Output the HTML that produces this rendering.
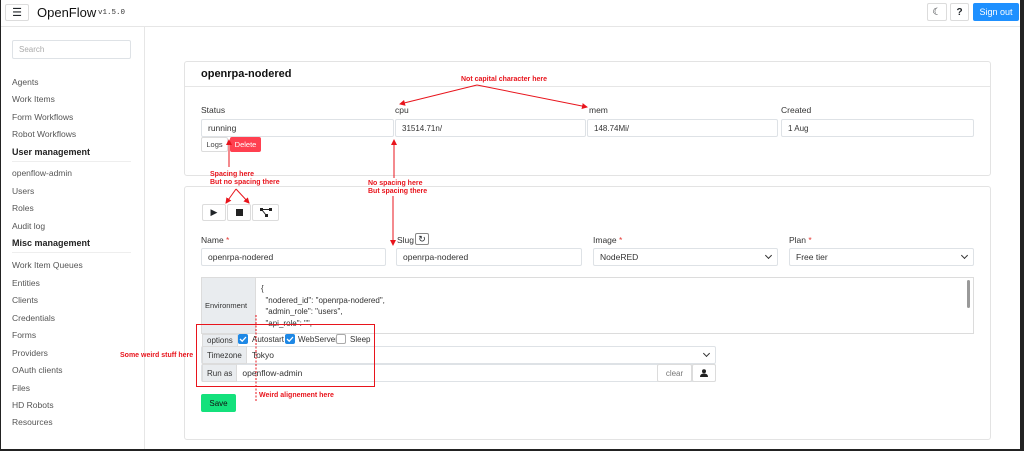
<!DOCTYPE html>
<html><head><meta charset="utf-8">
<style>
*{box-sizing:border-box;margin:0;padding:0}
body{width:1024px;height:451px;overflow:hidden;background:#fff;font-family:"Liberation Sans",sans-serif;color:#212529;position:relative;font-size:9px}
.a{position:absolute;white-space:nowrap}
.inp{position:absolute;border:1px solid #dee2e6;border-radius:2px;background:#fff;padding:0 6px;font-size:8.5px;display:flex;align-items:center;color:#333;white-space:nowrap}
.lbl{position:absolute;font-size:8.5px;color:#333;white-space:nowrap}
.card{position:absolute;border:1px solid #e3e3e3;border-radius:3px;background:#fff}
.nav{position:absolute;left:12px;font-size:8.5px;color:#555}
.navb{position:absolute;left:12px;font-size:9px;font-weight:bold;color:#222}
.btn{position:absolute;border:1px solid #dcdcdc;border-radius:2px;background:#fff;display:flex;align-items:center;justify-content:center;white-space:nowrap}
.req{color:#e53935}
.chev{position:absolute;right:6px;top:4px;width:5px;height:5px;border-right:1.2px solid #333;border-bottom:1.2px solid #333;transform:rotate(45deg)}
.grp{position:absolute;background:#e9ecef;border:1px solid #dcdcdc;display:flex;align-items:center;padding:0 4px;font-size:8px;color:#333;white-space:nowrap}
.cb{position:absolute;width:10px;height:10px;border-radius:2px}
.red{fill:#e8141c;font-family:"Liberation Sans",sans-serif;font-size:7px;font-weight:bold}
</style></head><body>
<div class="a" style="left:0;top:0;width:1px;height:451px;background:#222"></div>
<div class="a" style="left:1020px;top:0;width:4px;height:451px;background:#222"></div>
<div class="a" style="left:0;top:449px;width:1024px;height:2px;background:#222"></div>
<div class="a" style="left:1px;top:26px;width:1019px;height:1px;background:#e6e6e6"></div>
<div class="btn" style="left:5px;top:4px;width:24px;height:17px;font-size:11px">&#9776;</div>
<div class="a" style="left:37px;top:5px;font-size:13px;color:#111">OpenFlow</div>
<div class="a" style="left:98px;top:9px;font-size:7.5px;font-family:'Liberation Mono',monospace;color:#333">v1.5.0</div>
<div class="btn" style="left:927px;top:3px;width:20px;height:18px;font-size:10px">&#9790;</div>
<div class="btn" style="left:950px;top:3px;width:19px;height:18px;font-size:10px;font-weight:bold">?</div>
<div class="btn" style="left:973px;top:3px;width:46px;height:18px;background:#1e90ff;border-color:#1e90ff;color:#fff;font-size:9px">Sign out</div>
<div class="a" style="left:144px;top:27px;width:1px;height:422px;background:#e6e6e6"></div>
<div class="inp" style="left:12px;top:40px;width:119px;height:19px;color:#aaa;font-size:8px">Search</div>
<div class="nav" style="top:77px">Agents</div>
<div class="nav" style="top:94px">Work Items</div>
<div class="nav" style="top:112px">Form Workflows</div>
<div class="nav" style="top:129px">Robot Workflows</div>
<div class="navb" style="top:147px">User management</div>
<div class="a" style="left:12px;top:161px;width:119px;height:1px;background:#eee"></div>
<div class="nav" style="top:168px">openflow-admin</div>
<div class="nav" style="top:186px">Users</div>
<div class="nav" style="top:203px">Roles</div>
<div class="nav" style="top:221px">Audit log</div>
<div class="navb" style="top:238px">Misc management</div>
<div class="a" style="left:12px;top:252px;width:119px;height:1px;background:#eee"></div>
<div class="nav" style="top:260px">Work Item Queues</div>
<div class="nav" style="top:278px">Entities</div>
<div class="nav" style="top:295px">Clients</div>
<div class="nav" style="top:313px">Credentials</div>
<div class="nav" style="top:330px">Forms</div>
<div class="nav" style="top:348px">Providers</div>
<div class="nav" style="top:365px">OAuth clients</div>
<div class="nav" style="top:383px">Files</div>
<div class="nav" style="top:400px">HD Robots</div>
<div class="nav" style="top:417px">Resources</div>
<div class="card" style="left:184px;top:61px;width:807px;height:115px"></div>
<div class="a" style="left:185px;top:86px;width:805px;height:1px;background:#e6e6e6"></div>
<div class="a" style="left:201px;top:68px;font-size:11px;font-weight:bold;color:#111">openrpa-nodered</div>
<div class="lbl" style="left:201px;top:105px">Status</div>
<div class="lbl" style="left:395px;top:105px">cpu</div>
<div class="lbl" style="left:589px;top:105px">mem</div>
<div class="lbl" style="left:781px;top:105px">Created</div>
<div class="inp" style="left:201px;top:119px;width:193px;height:18px">running</div>
<div class="inp" style="left:395px;top:119px;width:191px;height:18px;font-size:8px">31514.71n/</div>
<div class="inp" style="left:587px;top:119px;width:191px;height:18px;font-size:8px">148.74Mi/</div>
<div class="inp" style="left:781px;top:119px;width:193px;height:18px;font-size:8px">1 Aug</div>
<div class="btn" style="left:201px;top:137px;width:27px;height:15px;font-size:7.5px;color:#444">Logs</div>
<div class="btn" style="left:230px;top:137px;width:31px;height:15px;font-size:7.5px;color:#fff;background:#ff4050;border-color:#ff4050">Delete</div>
<div class="card" style="left:184px;top:186px;width:807px;height:254px"></div>
<div class="btn" style="left:202px;top:204px;width:24px;height:17px;font-size:9px">&#9654;</div>
<div class="btn" style="left:227px;top:204px;width:24px;height:17px"><div style="width:7px;height:7px;background:#222"></div></div>
<div class="btn" style="left:252px;top:204px;width:27px;height:17px"><svg width="12" height="9" viewBox="0 0 12 9"><rect x="0" y="0" width="3" height="3" fill="#222"/><rect x="9" y="0" width="3" height="3" fill="#222"/><rect x="5" y="6" width="3" height="3" fill="#222"/><path d="M2 2L6 7M3 1.5H9" stroke="#222" stroke-width="1"/></svg></div>
<div class="lbl" style="left:201px;top:235px">Name <span class="req">*</span></div>
<div class="lbl" style="left:397px;top:235px">Slug</div>
<div class="btn" style="left:415px;top:233px;width:14px;height:12px;font-size:9px;border-color:#888">&#8635;</div>
<div class="lbl" style="left:593px;top:235px">Image <span class="req">*</span></div>
<div class="lbl" style="left:789px;top:235px">Plan <span class="req">*</span></div>
<div class="inp" style="left:201px;top:248px;width:185px;height:18px">openrpa-nodered</div>
<div class="inp" style="left:396px;top:248px;width:186px;height:18px">openrpa-nodered</div>
<div class="inp" style="left:593px;top:248px;width:185px;height:18px">NodeRED<div class="chev"></div></div>
<div class="inp" style="left:789px;top:248px;width:185px;height:18px">Free tier<div class="chev"></div></div>
<div class="a" style="left:255px;top:277px;width:719px;height:57px;border:1px solid #dcdcdc;background:#fff;overflow:hidden;font-size:8px;color:#333;padding:5px 5px;line-height:11.5px">{<br>&nbsp;&nbsp;"nodered_id": "openrpa-nodered",<br>&nbsp;&nbsp;"admin_role": "users",<br>&nbsp;&nbsp;"api_role": "",</div>
<div class="a" style="left:967px;top:280px;width:3px;height:28px;background:#999;border-radius:2px"></div>
<div class="grp" style="left:201px;top:277px;width:55px;height:57px;font-size:7.5px;padding:0 3px">Environment</div>
<div class="a" style="left:201px;top:333px;width:515px;height:1px;background:#dcdcdc"></div>
<div class="grp" style="left:202px;top:334px;width:36px;height:13px">options</div>
<div class="cb" style="left:238px;top:334px;background:#1e88e5"><svg width="10" height="10"><path d="M2 5l2.2 2.2L8 3" stroke="#fff" stroke-width="1.3" fill="none"/></svg></div>
<div class="lbl" style="left:252px;top:335px;font-size:8px">Autostart</div>
<div class="cb" style="left:285px;top:334px;background:#1e88e5"><svg width="10" height="10"><path d="M2 5l2.2 2.2L8 3" stroke="#fff" stroke-width="1.3" fill="none"/></svg></div>
<div class="lbl" style="left:298px;top:335px;font-size:8px">WebServer</div>
<div class="cb" style="left:336px;top:334px;border:1px solid #aaa;background:#fff"></div>
<div class="lbl" style="left:350px;top:335px;font-size:8px">Sleep</div>
<div class="inp" style="left:201px;top:346px;width:515px;height:18px;padding-left:0"><div class="grp" style="position:static;height:18px">Timezone</div><span style="margin-left:5px">Tokyo</span><div class="chev"></div></div>
<div class="inp" style="left:201px;top:364px;width:515px;height:18px;padding-left:0"><div class="grp" style="position:static;height:18px">Run as</div><span style="margin-left:5px">openflow-admin</span></div>
<div class="btn" style="left:657px;top:364px;width:35px;height:18px;font-size:8px;color:#777">clear</div>
<div class="btn" style="left:692px;top:364px;width:24px;height:18px"><svg width="8" height="8"><circle cx="4" cy="2.2" r="2" fill="#222"/><path d="M0 8Q0 4.5 4 4.5T8 8Z" fill="#222"/></svg></div>
<div class="btn" style="left:201px;top:394px;width:35px;height:18px;background:#14e17c;border-color:#14e17c;font-size:8px;color:#111">Save</div>
<svg class="a" style="left:0;top:0" width="1024" height="451">
<defs><marker id="ar" markerWidth="6" markerHeight="6" refX="5" refY="3" orient="auto"><path d="M0 0L6 3L0 6Z" fill="#e8141c"/></marker></defs>
<g stroke="#e8141c" stroke-width="1" fill="none">
<path d="M477 85L400 104" marker-end="url(#ar)"/>
<path d="M477 85L587 107" marker-end="url(#ar)"/>
<path d="M229 167V140" marker-end="url(#ar)"/>
<path d="M236 189L226 203" marker-end="url(#ar)"/>
<path d="M236 189L249 203" marker-end="url(#ar)"/>
<path d="M394 178V140" marker-end="url(#ar)"/>
<path d="M393 196V245" marker-end="url(#ar)"/>
<rect x="196.5" y="324.5" width="178" height="62"/>
<path d="M256 315V402" stroke-dasharray="2 1.5"/>
</g>
<text class="red" x="461" y="81">Not capital character here</text>
<text class="red" x="210" y="176">Spacing here</text>
<text class="red" x="210" y="184">But no spacing there</text>
<text class="red" x="368" y="185">No spacing here</text>
<text class="red" x="368" y="193">But spacing there</text>
<text class="red" x="120" y="357">Some weird stuff here</text>
<text class="red" x="259" y="397">Weird alignement here</text>
</svg>
</body></html>
